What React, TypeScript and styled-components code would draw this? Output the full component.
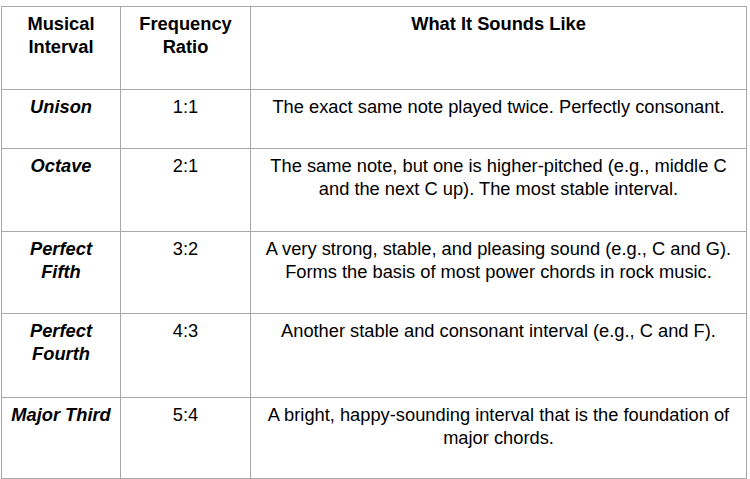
import React from "react";
import styled, { createGlobalStyle } from "styled-components";

const Global = createGlobalStyle`
  html, body { margin: 0; padding: 0; background: #ffffff; }
  body { font-family: "Liberation Sans", Arial, sans-serif; color: #000; }
`;

const Page = styled.div`
  padding: 6px 0 0 1px;
`;

const Table = styled.table`
  border-collapse: collapse;
  table-layout: fixed;
  width: 746px;
  font-family: "Liberation Sans", Arial, sans-serif;
  font-size: 18.3px;
  line-height: 23px;
  color: #000;
`;

const Cell = styled.td<{ $bold?: boolean; $italic?: boolean; $tail: number }>`
  border: 1px solid #a8a8a8;
  padding: 5px 7px ${(p) => p.$tail}px;
  vertical-align: top;
  text-align: center;
  font-weight: ${(p) => (p.$bold ? 700 : 400)};
  font-style: ${(p) => (p.$italic ? "italic" : "normal")};
`;

const HeadCell = styled.th`
  border: 1px solid #a8a8a8;
  padding: 5px 7px 31px;
  vertical-align: top;
  text-align: center;
  font-weight: 700;
`;

const rows: [string, string, string, number][] = [
  ["Unison", "1:1", "The exact same note played twice. Perfectly consonant.", 30],
  ["Octave", "2:1", "The same note, but one is higher-pitched (e.g., middle C and the next C up). The most stable interval.", 31],
  ["Perfect Fifth", "3:2", "A very strong, stable, and pleasing sound (e.g., C and G). Forms the basis of most power chords in rock music.", 30],
  ["Perfect Fourth", "4:3", "Another stable and consonant interval (e.g., C and F).", 32],
  ["Major Third", "5:4", "A bright, happy-sounding interval that is the foundation of major chords.", 29],
];

export default function App() {
  return (
    <>
      <Global />
      <Page>
        <Table>
          <colgroup>
            <col style={{ width: 119 }} />
            <col style={{ width: 130 }} />
            <col />
          </colgroup>
          <thead>
            <tr>
              <HeadCell>Musical Interval</HeadCell>
              <HeadCell>Frequency Ratio</HeadCell>
              <HeadCell>What It Sounds Like</HeadCell>
            </tr>
          </thead>
          <tbody>
            {rows.map(([a, b, c, t]) => (
              <tr key={a}>
                <Cell $bold $italic $tail={t}>{a}</Cell>
                <Cell $tail={t}>{b}</Cell>
                <Cell $tail={t}>{c}</Cell>
              </tr>
            ))}
          </tbody>
        </Table>
      </Page>
    </>
  );
}
